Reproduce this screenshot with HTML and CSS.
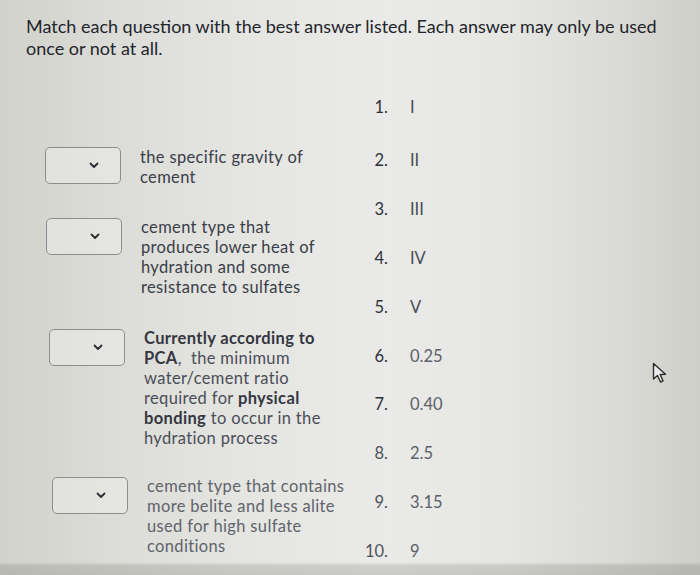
FILE: index.html
```html
<!DOCTYPE html>
<html lang="en">
<head>
<meta charset="utf-8">
<title>Match questions</title>
<link rel="stylesheet" href="styles.css">
</head>
<body>
<div class="page">
  <p class="prompt">Match each question with the best answer listed. Each answer may only be used once or not at all.</p>
  <div class="match">
    <div class="questions">
      <div class="qrow q1">
        <div class="select"><svg class="chev" width="10" height="7" viewBox="0 0 10 7"><path d="M1.5 1.5 L5 5 L8.5 1.5" fill="none" stroke="#2a2c31" stroke-width="1.8" stroke-linecap="round" stroke-linejoin="round"/></svg></div>
        <div class="qtext">the specific gravity of cement</div>
      </div>
      <div class="qrow q2">
        <div class="select"><svg class="chev" width="10" height="7" viewBox="0 0 10 7"><path d="M1.5 1.5 L5 5 L8.5 1.5" fill="none" stroke="#2a2c31" stroke-width="1.8" stroke-linecap="round" stroke-linejoin="round"/></svg></div>
        <div class="qtext">cement type that produces lower heat of hydration and some resistance to sulfates</div>
      </div>
      <div class="qrow q3">
        <div class="select"><svg class="chev" width="10" height="7" viewBox="0 0 10 7"><path d="M1.5 1.5 L5 5 L8.5 1.5" fill="none" stroke="#2a2c31" stroke-width="1.8" stroke-linecap="round" stroke-linejoin="round"/></svg></div>
        <div class="qtext"><b>Currently according to</b><br><b>PCA</b>,&nbsp; the minimum<br>water/cement ratio<br>required for <b>physical</b><br><b>bonding</b> to occur in the<br>hydration process</div>
      </div>
      <div class="qrow q4">
        <div class="select"><svg class="chev" width="10" height="7" viewBox="0 0 10 7"><path d="M1.5 1.5 L5 5 L8.5 1.5" fill="none" stroke="#2a2c31" stroke-width="1.8" stroke-linecap="round" stroke-linejoin="round"/></svg></div>
        <div class="qtext">cement type that contains more belite and less alite used for high sulfate conditions</div>
      </div>
    </div>
    <ol class="answers">
      <li><span class="num">1.</span><span class="val">I</span></li>
      <li><span class="num">2.</span><span class="val">II</span></li>
      <li><span class="num">3.</span><span class="val">III</span></li>
      <li><span class="num">4.</span><span class="val">IV</span></li>
      <li><span class="num">5.</span><span class="val">V</span></li>
      <li><span class="num">6.</span><span class="val">0.25</span></li>
      <li><span class="num">7.</span><span class="val">0.40</span></li>
      <li><span class="num">8.</span><span class="val">2.5</span></li>
      <li><span class="num">9.</span><span class="val">3.15</span></li>
      <li><span class="num">10.</span><span class="val">9</span></li>
    </ol>
  </div>
  <svg class="cursor" width="16" height="22" viewBox="0 0 16 22"><path d="M1.5 1.5 L1.5 17 L5.5 13.5 L8.5 20 L11 18.8 L8.2 12.5 L13.5 12.2 Z" fill="#ececea" stroke="#2b2d30" stroke-width="1.4" stroke-linejoin="round"/></svg>
</div>
</body>
</html>
```
FILE: styles.css
```css
html, body {
  margin: 0;
  padding: 0;
}
body {
  width: 700px;
  height: 575px;
  overflow: hidden;
  font-family: Lato, "Open Sans", sans-serif;
  background:
    linear-gradient(to bottom, rgba(0,0,0,0) 0, rgba(0,0,0,0) 562px, rgba(90,90,80,0.2) 566px, rgba(90,90,80,0.22) 575px),
    linear-gradient(to right, #d2d2cc 0%, #dbdbd7 15%, #e5e5e2 35%, #eaeae8 55%, #e6e6e3 72%, #dadad6 88%, #cfcfca 100%);
}
.page {
  position: relative;
  height: 575px;
  padding: 15px 26px 0 26px;
  box-sizing: border-box;
}
.prompt {
  margin: 0;
  width: 650px;
  font-size: 18px;
  line-height: 22px;
  color: #23252c;
}
.match {
  display: flex;
  margin-top: 35px;
}
.questions {
  width: 322px;
  padding-top: 52px;
  display: flex;
  flex-direction: column;
}
.qrow {
  display: flex;
  align-items: flex-start;
}
.q1 { margin-left: 19px; }
.q2 { margin-left: 20px; margin-top: 30px; }
.q3 { margin-left: 23px; margin-top: 31px; }
.q4 { margin-left: 26px; margin-top: 28px; }
.select {
  height: 35px;
  width: 53px;
  padding-right: 21px;
  border: 1.5px solid #8b8d90;
  border-radius: 5px;
  background: rgba(240,240,238,0.45);
  flex: none;
  display: flex;
  align-items: center;
  justify-content: flex-end;
  margin-top: 1px;
}
.qtext {
  margin-left: 19px;
  width: 195px;
  font-size: 16.5px;
  letter-spacing: 0.35px;
  line-height: 20px;
  color: #3a3e48;
}
.q1 .qtext { margin-top: 1px; }
.q3 .qtext { color: #4a4e57; width: 200px; }
.q4 .qtext { width: 215px; color: #60646b; }
.qtext b {
  font-weight: 700;
  color: #34373f;
}
.answers {
  list-style: none;
  margin: 0;
  padding: 0;
  margin-left: 2px;
  padding-top: 3px;
}
.answers li {
  display: flex;
  height: 48.9px;
  font-size: 16.5px;
  line-height: 20px;
  color: #3c4048;
}
.answers li:first-child { height: 53px; }
.num {
  width: 38px;
  text-align: right;
  color: #2f3239;
}
.val {
  margin-left: 22px;
  color: #484c55;
}
.answers li:nth-child(n+6) .val { color: #5c6068; }
.answers li:nth-child(n+8) .num { color: #50545b; }
.cursor {
  position: absolute;
  left: 652px;
  top: 362px;
}
```
